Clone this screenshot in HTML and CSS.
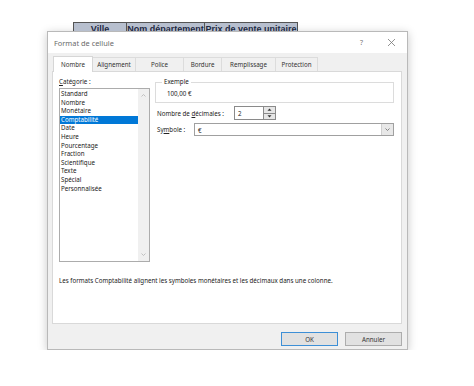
FILE: index.html
```html
<!DOCTYPE html>
<html>
  <head>
    <title>Format de cellule</title>
    <meta name="viewport" content="width=device-width,initial-scale=1">
    <link rel="stylesheet" href="styles.css">
  </head>
  <body>

    <div class="sheet">
      <div class="sheet-row">
        <div class="cell c1">Ville</div>
        <div class="cell c2">Nom département</div>
        <div class="cell c3">Prix de vente unitaire</div>
      </div>
    </div>

    <div class="dialog">
      <div class="titlebar">
        <span class="title">Format de cellule</span>
        <span class="help">?</span>
        <svg class="close" width="9" height="9" viewBox="0 0 9 9"><path d="M1 1 L8 8 M8 1 L1 8" stroke="#777" stroke-width="0.8" fill="none"/></svg>
      </div>

      <div class="dialog-body">
        <div class="tabs">
          <div class="tab active t1">Nombre</div>
          <div class="tab t2">Alignement</div>
          <div class="tab t3">Police</div>
          <div class="tab t4">Bordure</div>
          <div class="tab t5">Remplissage</div>
          <div class="tab t6">Protection</div>
        </div>

        <div class="panel">
          <div class="columns">
            <div class="left">
              <div class="label"><u>C</u>atégorie :</div>
              <div class="listbox">
                <div class="items">
                  <div class="item">Standard</div>
                  <div class="item">Nombre</div>
                  <div class="item">Monétaire</div>
                  <div class="item selected">Comptabilité</div>
                  <div class="item">Date</div>
                  <div class="item">Heure</div>
                  <div class="item">Pourcentage</div>
                  <div class="item">Fraction</div>
                  <div class="item">Scientifique</div>
                  <div class="item">Texte</div>
                  <div class="item">Spécial</div>
                  <div class="item">Personnalisée</div>
                </div>
                <div class="scrollbar">
                  <svg width="7" height="5" viewBox="0 0 7 5"><path d="M1.5 3.5 L3.5 1.5 L5.5 3.5" stroke="#b5b5b5" stroke-width="0.8" fill="none"/></svg>
                  <svg width="7" height="5" viewBox="0 0 7 5"><path d="M1.5 1.5 L3.5 3.5 L5.5 1.5" stroke="#b5b5b5" stroke-width="0.8" fill="none"/></svg>
                </div>
              </div>
            </div>

            <div class="right">
              <div class="sample">
                <span class="sample-legend">Exemple</span>
                <div class="sample-value">100,00 €</div>
              </div>

              <div class="field">
                <span class="field-label">Nombre de <u>d</u>écimales :</span>
                <div class="spin">
                  <div class="spin-value">2</div>
                  <div class="spin-buttons">
                    <div class="spin-btn"><svg width="5" height="3" viewBox="0 0 5 3"><path d="M0.5 2.7 L2.5 0.5 L4.5 2.7 Z" fill="#333"/></svg></div>
                    <div class="spin-btn"><svg width="5" height="3" viewBox="0 0 5 3"><path d="M0.5 0.3 L2.5 2.5 L4.5 0.3 Z" fill="#333"/></svg></div>
                  </div>
                </div>
              </div>

              <div class="field">
                <span class="field-label sym">Sy<u>m</u>bole :</span>
                <div class="select">
                  <div class="select-value">€</div>
                  <div class="select-btn"><svg width="7" height="5" viewBox="0 0 7 5"><path d="M1.5 1.5 L3.5 3.5 L5.5 1.5" stroke="#777" stroke-width="0.9" fill="none"/></svg></div>
                </div>
              </div>
            </div>
          </div>

          <p class="desc">Les formats Comptabilité alignent les symboles monétaires et les décimaux dans une colonne.</p>
        </div>

        <div class="buttons">
          <div class="btn default">OK</div>
          <div class="btn">Annuler</div>
        </div>
      </div>
    </div>

  </body>
</html>
```

FILE: styles.css
```css
* {
  box-sizing: border-box;
  margin: 0;
  padding: 0;
}

body {
  margin: 0;
  background-color: #fff;
  font-family: "Noto Sans", "Open Sans", sans-serif;
  font-size: 6.2px;
  color: #222;
}

u {
  text-decoration-thickness: 0.5px;
  text-underline-offset: 1px;
}

/* worksheet behind the dialog */
.sheet {
  padding: 22px 0 0 73px;
}
.sheet-row {
  display: flex;
  height: 9px;
  overflow: hidden;
  border: solid 1px #555;
  border-bottom: none;
  width: fit-content;
}
.cell {
  height: 14px;
  padding-top: 1px;
  background-color: #b7bfce;
  border-right: solid 1px #555;
  font-family: "Liberation Sans", Arial, sans-serif;
  font-weight: bold;
  font-size: 9px;
  color: #1f2a44;
  text-align: center;
}
.cell:last-child { border-right: none; }
.c1 { width: 53px; }
.c2 { width: 78px; }
.c3 { width: 92px; }

/* dialog */
.dialog {
  margin-left: 47px;
  width: 361px;
  height: 319px;
  background-color: #f0f0f0;
  border: solid 1px #b9b9b9;
  box-shadow: 0 2px 9px rgba(0, 0, 0, 0.22);
}

.titlebar {
  display: flex;
  align-items: center;
  height: 21px;
  background-color: #fff;
  padding-left: 6px;
}
.title {
  flex: 1;
  font-size: 7.4px;
  color: #6a6a6a;
}
.help {
  font-size: 7px;
  color: #777;
  margin-right: 24px;
}
.close {
  margin-right: 11px;
}

.dialog-body {
  padding: 3px 5px 0 4px;
}

.tabs {
  display: flex;
  height: 15px;
  padding-left: 1px;
}
.tab {
  display: flex;
  align-items: center;
  justify-content: center;
  height: 14px;
  margin-top: 1px;
  border-top: solid 1px #dcdcdc;
  border-right: solid 1px #dcdcdc;
  font-size: 6.2px;
  color: #333;
}
.tab.active {
  height: 16px;
  margin-top: 0;
  margin-bottom: -1px;
  background-color: #fff;
  border: solid 1px #d6d6d6;
  border-bottom: none;
  position: relative;
}
.t1 { width: 40px; }
.t2 { width: 43px; }
.t3 { width: 48px; }
.t4 { width: 38px; }
.t5 { width: 54px; }
.t6 { width: 42px; }

.panel {
  height: 253px;
  background-color: #fff;
  border: solid 1px #d9d9d9;
  padding: 5px 6px 0 6px;
}

.columns {
  display: flex;
  gap: 5px;
}

.label {
  height: 11px;
  line-height: 9px;
}

.listbox {
  display: flex;
  width: 91px;
  height: 174px;
  border: solid 1px #acacac;
}
.items {
  flex: 1;
  padding-top: 1px;
}
.item {
  height: 8.6px;
  line-height: 8.6px;
  padding-left: 1px;
}
.item.selected {
  background-color: #0078d7;
  color: #fff;
}
.scrollbar {
  width: 11px;
  background-color: #f0f0f0;
  display: flex;
  flex-direction: column;
  justify-content: space-between;
  align-items: center;
  padding: 4px 0 4px;
}

.right {
  flex: 1;
  padding-top: 5px;
}

.sample {
  height: 21px;
  border: solid 1px #dcdcdc;
  padding-left: 11px;
  margin-right: 1px;
}
.sample-legend {
  display: block;
  width: fit-content;
  margin: -5px 0 0 -5px;
  padding: 0 2px;
  background-color: #fff;
  line-height: 8px;
}
.sample-value {
  margin-top: 3px;
}

.field {
  display: flex;
  align-items: center;
  margin-top: 3px;
  margin-left: 2px;
}
.field-label {
  width: 77px;
}
.field-label.sym {
  width: 37px;
}

.spin {
  display: flex;
  height: 14px;
}
.spin-value {
  width: 30px;
  border: solid 1px #8a8a8a;
  padding: 2px 0 0 3px;
}
.spin-buttons {
  display: flex;
  flex-direction: column;
  width: 12px;
  border: solid 1px #8a8a8a;
  border-left: none;
}
.spin-btn {
  flex: 1;
  display: flex;
  align-items: center;
  justify-content: center;
  background-color: #e6e6e6;
}
.spin-btn:first-child {
  border-bottom: solid 1px #8a8a8a;
}

.select {
  flex: 1;
  display: flex;
  height: 13px;
  margin-right: 1px;
  border: solid 1px #a0a0a0;
}
.select-value {
  flex: 1;
  padding: 2px 0 0 3px;
}
.select-btn {
  width: 12px;
  display: flex;
  align-items: center;
  justify-content: center;
  background-color: #e8e8e8;
  border-left: solid 1px #cfcfcf;
}

.desc {
  margin-top: 14px;
}

.buttons {
  display: flex;
  justify-content: flex-end;
  gap: 7px;
  margin-top: 8px;
}
.btn {
  width: 57px;
  height: 14px;
  display: flex;
  align-items: center;
  justify-content: center;
  background-color: #e1e1e1;
  border: solid 1px #adadad;
  font-size: 6.2px;
  color: #333;
}
.btn.default {
  border: solid 1.5px #3d8fd6;
}
```
